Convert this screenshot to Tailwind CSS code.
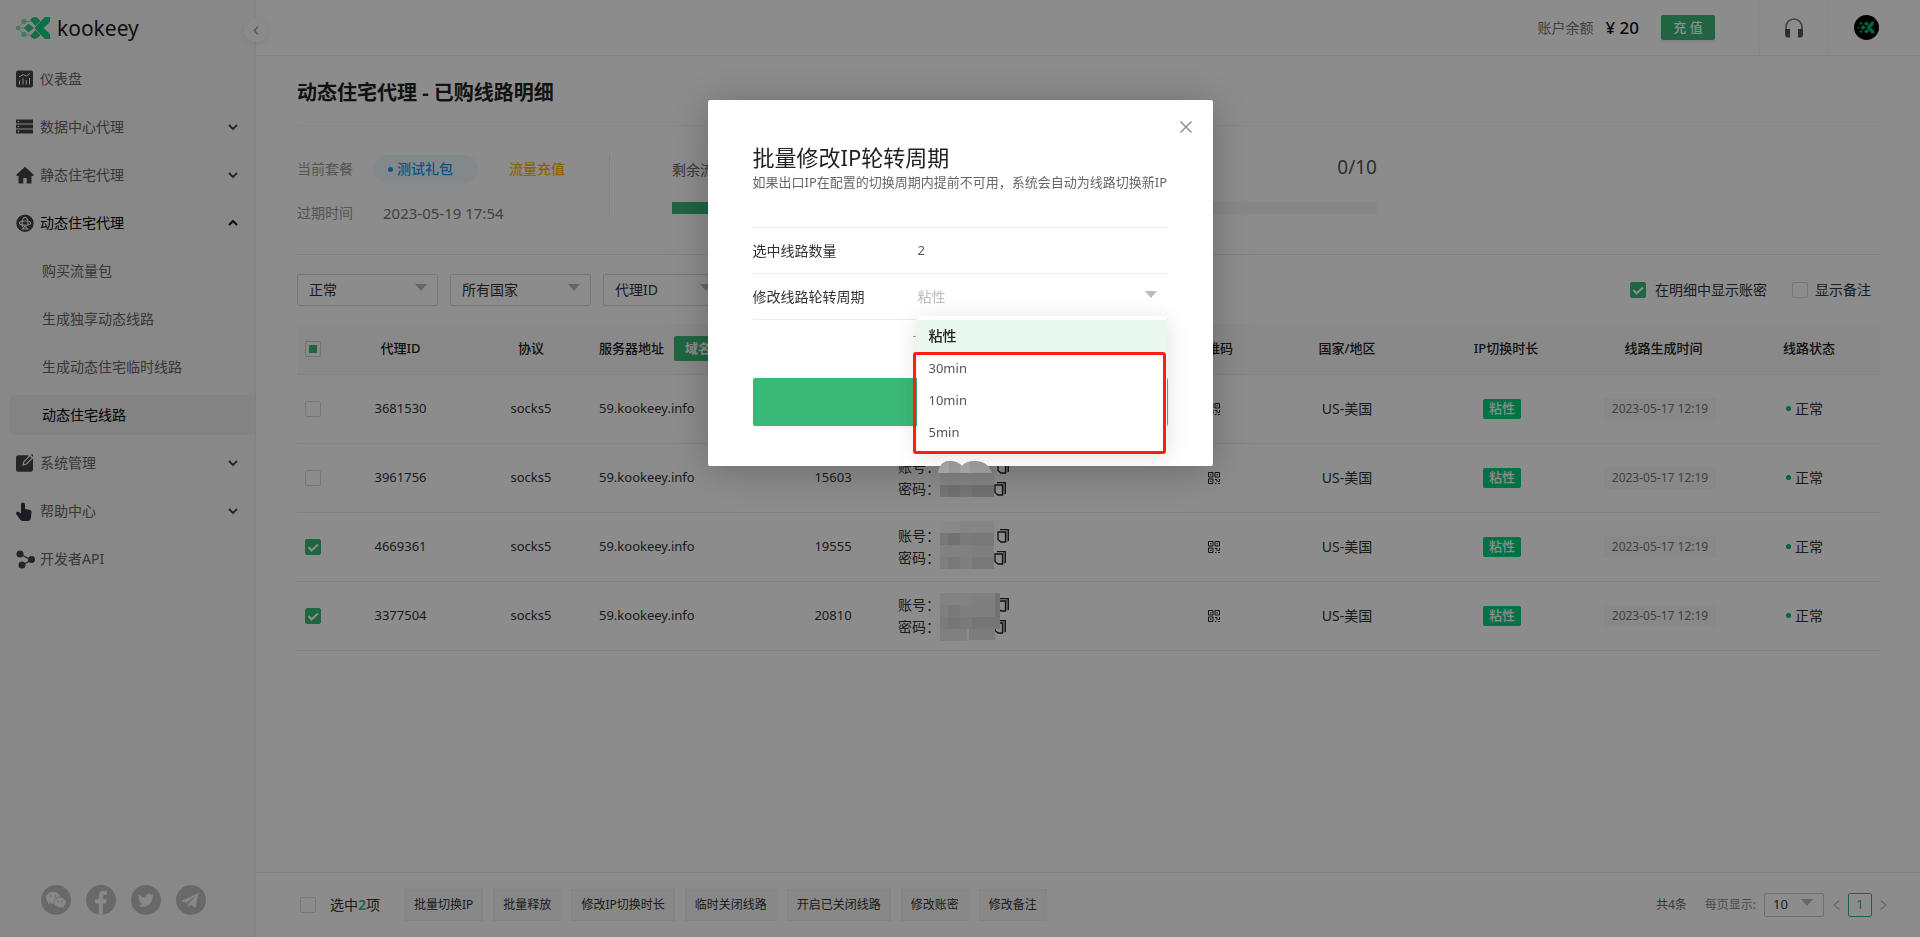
<!DOCTYPE html>
<html lang="zh-CN">
<head>
    <meta charset="UTF-8">
    <meta name="viewport" content="width=device-width, initial-scale=1.0">
    <title>kookeey - 动态住宅线路</title>

    <!-- Tailwind CSS -->
    <script src="https://cdn.jsdelivr.net/npm/@tailwindcss/browser@4"></script>
</head>
<body class="h-screen overflow-hidden bg-white font-['Noto_Sans','Noto_Sans_CJK_SC',sans-serif] text-sm text-[#333]">

    <div class="flex h-full">

        <!-- Sidebar -->
        <aside class="relative flex w-64 shrink-0 flex-col border-r border-[#ebebeb] bg-[#f8f8f8]">
            <a href="#" class="flex h-[55px] shrink-0 items-center gap-[6px] pl-4">
                <svg class="h-[24px] w-[35px]" viewBox="0 0 35 24" aria-hidden="true">
                    <g fill="#00b869" stroke="#00b869">
                        <g opacity=".45" stroke-width="1"><path d="M2 12h8M7 5.500h8M7 19h8M2 12l6-6.500M2 12l6 7"/><circle cx="2" cy="12" r="1.800"/><circle cx="8" cy="5.500" r="2.300"/><circle cx="8" cy="18.500" r="2.300"/></g>
                        <g stroke="none" opacity=".8"><path d="M12.500 7.500l5.500 4.500-5.500 4.500L8 12z"/><path d="M14 4Q18-1 22 2.500L24.500 5l-5 5z"/><path d="M14 20Q18 25 22 21.500l2.500-2.500-5-5z"/></g>
                        <path stroke="none" fill="#00d07a" d="M29 1h5v5l-6.500 6L34 18v5h-5L18.500 12z"/>
                    </g>
                </svg>
                <span class="text-[21px] leading-6 text-[#1d1d1d]">kookeey</span>
            </a>
            <nav id="menu"></nav>
            <div class="mt-auto mb-[22px] flex gap-[15px] pl-[41px]">
                <a href="#" aria-label="微信"><svg class="size-[30px]" viewBox="0 0 30 30"><circle cx="15" cy="15" r="15" fill="#c0c0c0"/><g fill="#f8f8f8"><path d="M12 7c-4 0-7 2.600-7 5.800 0 1.900 1 3.500 2.600 4.600L7 19.500l2.500-1.200c1 .3 2 .4 3.200.3-.8-4 2.300-6.800 6.200-6.800C18.300 9 15.500 7 12 7z"/><path d="M19 12.800c-3.300 0-5.900 2.100-5.900 4.800s2.600 4.800 5.900 4.800c.8 0 1.500-.1 2.200-.4l2.100 1.100-.6-1.900c1.400-.9 2.200-2.200 2.200-3.600 0-2.700-2.600-4.800-5.900-4.800z"/></g><g fill="#c0c0c0"><circle cx="9.500" cy="11" r=".9"/><circle cx="14.300" cy="11" r=".9"/><circle cx="17" cy="16.300" r=".8"/><circle cx="21" cy="16.300" r=".8"/></g></svg></a>
                <a href="#" aria-label="Facebook"><svg class="size-[30px]" viewBox="0 0 30 30"><circle cx="15" cy="15" r="15" fill="#c0c0c0"/><path fill="#f8f8f8" d="M12.800 29.800V18.500H9v-4.300h3.800v-3.300c0-3.300 2-5.100 5-5.100h3v4h-2c-1.500 0-2 .8-2 1.900v2.500h3.900l-.6 4.300h-3.300v11.300z"/></svg></a>
                <a href="#" aria-label="Twitter"><svg class="size-[30px]" viewBox="0 0 30 30"><circle cx="15" cy="15" r="15" fill="#c0c0c0"/><path fill="#f8f8f8" d="M23 10.200c-.6.300-1.200.4-1.900.5.700-.4 1.200-1 1.400-1.800-.6.400-1.300.6-2.100.8a3.300 3.300 0 0 0-5.600 3A9.300 9.300 0 0 1 8 9.300a3.300 3.300 0 0 0 1 4.400c-.5 0-1-.2-1.500-.4 0 1.600 1.100 2.900 2.600 3.200-.5.100-1 .2-1.500.1.400 1.300 1.600 2.200 3.100 2.300A6.600 6.600 0 0 1 7 20.200 9.300 9.300 0 0 0 21.400 12c.6-.5 1.200-1.100 1.600-1.800z"/></svg></a>
                <a href="#" aria-label="Telegram"><svg class="size-[30px]" viewBox="0 0 30 30"><circle cx="15" cy="15" r="15" fill="#c0c0c0"/><path fill="#f8f8f8" d="M22.500 8L5.500 16l5 1.800 9.500-7.300-7.500 8.200v3.800l2.500-2.700 4.500 3z"/></svg></a>
            </div>
            <button type="button" aria-label="收起菜单" class="absolute top-[18px] -right-[13px] flex size-6 items-center justify-center rounded-full bg-[#fbfbfb] shadow-[0_2px_6px_rgba(0,0,0,0.08)]">
                <svg class="h-[9px] w-[6px]" viewBox="0 0 6 9" fill="none" stroke="#999" stroke-width="1.300"><path d="M5 .7L1.200 4.500 5 8.300"/></svg>
            </button>
        </aside>

        <div class="flex min-w-0 flex-1 flex-col">

            <!-- Top bar -->
            <header class="flex h-14 shrink-0 items-center justify-end border-b border-[#efefef]">
                <span class="text-[#777]">账户余额</span>
                <span class="ml-3 text-[17px] font-medium leading-6 text-[#111]">¥ 20</span>
                <button type="button" class="mr-11 ml-[22px] h-[25px] w-[54px] rounded-[2px] bg-[#3ab877] text-[13px] font-medium text-white shadow-[0_2px_2px_rgba(0,0,0,0.05)]">充 值</button>
                <a href="#" aria-label="客服" class="flex h-full w-[69px] items-center justify-center border-x border-[#f7f7f7]">
                    <svg class="h-5 w-[18px]" viewBox="0 0 18 20"><path d="M1 13V9a8 8 0 0 1 16 0v4" fill="none" stroke="#777" stroke-width="1.600"/><path fill="#555" d="M0 11h5v8.500H2.500Q0 19 0 16.500zM18 11h-5v8.500h2.500q2.500-.5 2.500-3z"/></svg>
                </a>
                <a href="#" aria-label="账户" class="mr-[41px] ml-[26px]">
                    <svg class="size-[25px]" viewBox="0 0 25 25"><circle cx="12.500" cy="12.500" r="12.500"/><g fill="#00b869"><path d="M17.500 6.500H20v3L17 12.500l3 3v3h-2.500l-5-6z"/><path d="M9 10l3 2.500L9 15l-2.500-2.500zM12 6.500l3 2-2 2.500-3-2zM12 18.500l3-2-2-2.500-3 2z"/><circle cx="7" cy="8.500" r="1.200"/><circle cx="7" cy="16.500" r="1.200"/><circle cx="4.500" cy="12.500" r=".9"/></g></svg>
                </a>
            </header>

            <!-- Page content -->
            <main class="flex-1 pr-10 pl-[41px]">
                <h1 class="flex h-[70px] items-center border-b border-[#f3f3f3] pt-1 text-xl font-bold text-[#222]">动态住宅代理 - 已购线路明细</h1>

                <section class="flex h-[129px] items-start border-b border-[#eaeaea] pt-7">
                    <div class="flex h-[62px] w-[313px] shrink-0 flex-col gap-4 border-r border-[#e9e9e9]">
                        <div class="flex items-center pt-px">
                            <span class="w-[76px] leading-7 text-[#999]">当前套餐</span>
                            <span class="flex h-7 w-[105px] items-center gap-1 rounded-full bg-[#effafd] pl-[15px] font-medium text-[#1199f0]"><i class="size-[5px] rounded-full bg-[#1199f0]"></i>测试礼包</span>
                            <a href="#" class="ml-[31px] font-medium text-[#ffb400]">流量充值</a>
                        </div>
                        <div class="flex items-center">
                            <span class="w-[86px] leading-7 text-[#999]">过期时间</span>
                            <span class="text-[15px] leading-7 text-[#777]">2023-05-19 17:54</span>
                        </div>
                    </div>
                    <div class="ml-[62px] w-[333px] shrink-0">
                        <div class="flex h-12 items-center pb-4 text-[#666]">剩余流量</div>
                        <div class="h-3 bg-[#3ab877]"></div>
                    </div>
                    <div class="ml-[40px] w-[332px] shrink-0">
                        <div class="flex h-12 items-center justify-between pb-5 text-[#666]">
                            <span>线路数量</span>
                            <span class="text-[19px] text-[#555]">0/10</span>
                        </div>
                        <div class="h-3 bg-[#f5f5f5]"></div>
                    </div>
                </section>

                <div class="flex h-[69px] items-center gap-3">
                    <div class="relative w-[141px]">
                        <select aria-label="线路状态" class="h-8 w-full appearance-none rounded-[2px] border border-[#d9d9d9] px-[11px] text-[#333]"><option>正常</option></select>
                        <svg class="pointer-events-none absolute top-[10px] right-[11px] h-[7px] w-3" viewBox="0 0 12 7" fill="#bbb"><path d="M0 0h12L6 7z"/></svg>
                    </div>
                    <div class="relative w-[141px]">
                        <select aria-label="国家" class="h-8 w-full appearance-none rounded-[2px] border border-[#d9d9d9] px-[11px] text-[#333]"><option>所有国家</option></select>
                        <svg class="pointer-events-none absolute top-[10px] right-[11px] h-[7px] w-3" viewBox="0 0 12 7" fill="#bbb"><path d="M0 0h12L6 7z"/></svg>
                    </div>
                    <div class="relative w-[120px]">
                        <select aria-label="搜索字段" class="h-8 w-full appearance-none rounded-[2px] border border-[#d9d9d9] px-[11px] text-[#333]"><option>代理ID</option></select>
                        <svg class="pointer-events-none absolute top-[10px] right-[11px] h-[7px] w-3" viewBox="0 0 12 7" fill="#bbb"><path d="M0 0h12L6 7z"/></svg>
                    </div>
                    <label class="ml-auto flex items-center gap-[9px]">
                        <span class="relative size-4">
                            <input type="checkbox" checked class="peer block size-4 appearance-none rounded-[2px] border border-[#d9d9d9] checked:border-[#3ab877] checked:bg-[#3ab877]">
                            <svg class="pointer-events-none absolute inset-0 hidden size-4 peer-checked:block" viewBox="0 0 16 16" fill="none" stroke="#fff" stroke-width="2"><path d="M3.500 8l3 3.500 6.500-6"/></svg>
                        </span>
                        在明细中显示账密
                    </label>
                    <label class="mr-[9px] ml-[13px] flex items-center gap-[7px]">
                        <input type="checkbox" class="block size-4 appearance-none rounded-[2px] border border-[#d9d9d9]">
                        显示备注
                    </label>
                </div>

                <table class="w-full table-fixed border-collapse text-center">
                    <colgroup>
                        <col class="w-8"><col class="w-[143px]"><col class="w-[118px]"><col class="w-[199px]"><col class="w-[88px]"><col>
                        <col class="w-[141px]"><col class="w-[126px]"><col class="w-[188px]"><col class="w-[128px]"><col class="w-[154px]">
                    </colgroup>
                    <thead>
                        <tr class="h-[50px] border-b border-[#ebebeb] bg-[#f9f9f9] text-[13px] text-[#222]">
                            <th><input type="checkbox" aria-label="全选" class="mx-auto block size-4 appearance-none rounded-[2px] border border-[#d0d0d0] bg-[#3ab877] bg-clip-content p-[3px]"></th>
                            <th class="font-medium">代理ID</th>
                            <th class="font-medium">协议</th>
                            <th class="pl-[9px] text-left font-medium">
                                <div class="flex items-center gap-[10px]">服务器地址 <button type="button" class="h-[25px] rounded-[2px] bg-[#3ab877] px-[11px] font-bold text-white">域名</button></div>
                            </th>
                            <th class="font-medium">端口</th>
                            <th class="pl-[21px] text-left font-medium">账密</th>
                            <th class="font-medium">二维码</th>
                            <th class="font-medium">国家/地区</th>
                            <th class="pl-1 font-medium">IP切换时长</th>
                            <th class="pl-[3px] font-medium">线路生成时间</th>
                            <th class="pl-3 font-medium">线路状态</th>
                        </tr>
                    </thead>
                    <tbody id="lineList"></tbody>
                </table>
            </main>

            <!-- Batch actions -->
            <footer class="flex h-[65px] shrink-0 items-center border-t border-[#ebebeb] pr-[33px] pl-11 text-xs">
                <label class="mr-6 flex items-center gap-[14px] text-sm text-[#333]">
                    <input type="checkbox" class="block size-4 appearance-none rounded-[2px] border border-[#d9d9d9]">
                    <span>选中<b class="font-semibold text-[#3ab877]">2</b>项</span>
                </label>
                <div class="flex gap-[10px]">
                    <button type="button" class="h-8 border border-[#f1f1f1] bg-[#f8f8f8] px-[9px]">批量切换IP</button>
                    <button type="button" class="h-8 border border-[#f1f1f1] bg-[#f8f8f8] px-[9px]">批量释放</button>
                    <button type="button" class="h-8 border border-[#f1f1f1] bg-[#f8f8f8] px-[9px]">修改IP切换时长</button>
                    <button type="button" class="h-8 border border-[#f1f1f1] bg-[#f8f8f8] px-[9px]">临时关闭线路</button>
                    <button type="button" class="h-8 border border-[#f1f1f1] bg-[#f8f8f8] px-[9px]">开启已关闭线路</button>
                    <button type="button" class="h-8 border border-[#f1f1f1] bg-[#f8f8f8] px-[9px]">修改账密</button>
                    <button type="button" class="h-8 border border-[#f1f1f1] bg-[#f8f8f8] px-[9px]">修改备注</button>
                </div>
                <span class="mr-[18px] ml-auto text-[#666]">共4条</span>
                <label for="pageSize" class="mr-2 text-[#888]">每页显示:</label>
                <div class="relative mr-[9px] w-[60px]">
                    <select id="pageSize" class="block h-6 w-full appearance-none rounded-[2px] border border-[#ccc] px-2 text-[13px]"><option>10</option></select>
                    <svg class="pointer-events-none absolute top-[6px] right-[11px] h-[7px] w-3" viewBox="0 0 12 7" fill="#bbb"><path d="M0 0h12L6 7z"/></svg>
                </div>
                <button type="button" aria-label="上一页"><svg class="h-[10px] w-[7px]" viewBox="0 0 7 10" fill="none" stroke="#bbb" stroke-width="1.200"><path d="M6.500 .5L1 5l5.500 4.500"/></svg></button>
                <button type="button" class="mx-2 size-6 rounded-[2px] border border-[#3ab877] text-[13px] text-[#3ab877]">1</button>
                <button type="button" aria-label="下一页"><svg class="h-[10px] w-[7px]" viewBox="0 0 7 10" fill="none" stroke="#bbb" stroke-width="1.200"><path d="M.5 .5L6 5 .5 9.500"/></svg></button>
            </footer>
        </div>
    </div>

    <!-- Rotation dialog -->
    <div class="fixed inset-0 z-10 flex items-start justify-center bg-black/45 pt-[100px]">
        <div role="dialog" aria-labelledby="dialogTitle" class="relative w-[505px] rounded-[2px] bg-white px-[45px] pt-[43px] pb-10 shadow-[0_4px_40px_rgba(0,0,0,0.25)]">
            <button type="button" aria-label="关闭" class="absolute top-[21px] right-[21px]">
                <svg class="size-3" viewBox="0 0 12 12" fill="none" stroke="#888" stroke-width="1.400"><path d="M.5 .5l11 11M11.500 .5l-11 11"/></svg>
            </button>
            <h2 id="dialogTitle" class="text-[22px] leading-7 text-[#222]">批量修改IP轮转周期</h2>
            <p class="text-[13px] leading-[22px] whitespace-nowrap text-[#666]">如果出口IP在配置的切换周期内提前不可用，系统会自动为线路切换新IP</p>

            <div class="mt-[34px] flex h-[46px] items-center border-t border-[#ececec]">
                <span class="w-[165px]">选中线路数量</span>
                <span class="text-[13px] text-[#555]">2</span>
            </div>
            <div class="relative flex h-[47px] items-center border-y border-[#ececec]">
                <label for="period" class="w-[165px]">修改线路轮转周期</label>
                <select id="period" class="h-8 flex-1 appearance-none text-[#bbb]"><option>粘性</option></select>
                <svg class="pointer-events-none absolute top-[17px] right-[11px] h-[7px] w-3" viewBox="0 0 12 7" fill="#bbb"><path d="M0 0h12L6 7z"/></svg>
                <ul class="absolute top-[42px] right-px z-20 w-[250px] rounded-[2px] bg-white py-1 text-[13px] leading-8 text-[#555] shadow-[0_4px_24px_rgba(0,0,0,0.13)]">
                    <li class="bg-[#e9f9f0] px-3 text-sm leading-8 font-medium text-[#222]">粘性</li>
                    <li class="px-3">30min</li>
                    <li class="px-3">10min</li>
                    <li class="px-3">5min</li>
                </ul>
                <div class="absolute top-[78px] right-[2px] z-30 h-[102px] w-[253px] rounded-[3px] border-3 border-[#ff1e10]"></div>
            </div>
            <p class="h-[58px] pt-2 pl-[160px] text-xs text-[#999]">-</p>
            <button type="button" aria-label="确定" class="block h-12 w-full rounded-[2px] bg-[#3ab877] text-white shadow-[0_2px_2px_rgba(0,0,0,0.05)]"></button>

            <svg class="absolute -bottom-[7px] left-[230px] h-3 w-[54px]" viewBox="0 0 54 12"><path fill="#9b9b9b" d="M0 12Q2 0 12 0q8 0 12 5Q28 0 37 0q13 0 17 12z"/><path fill="#a5a5a5" d="M0 12Q2 0 11 0v12zM22 12V3l2 2q2-3 8-4.500V12z"/></svg>
        </div>
    </div>

    <script>
        const icons = {
            chart: '<path d="M2 0h13q2 0 2 2v13q0 2-2 2H2q-2 0-2-2V2q0-2 2-2z"/><path d="M3.500 10v4M7 8v6M10.300 9.500v4.500M13.500 7.500V14M3 6.500L7 4l3.500 1.500L14 3" fill="none" stroke="#f8f8f8"/>',
            server: '<path d="M0 1h17v4H0zM0 6h17v4H0zM0 11h17v4H0z"/><g fill="#f8f8f8"><circle cx="2.500" cy="3" r=".8"/><circle cx="2.500" cy="8" r=".8"/><circle cx="2.500" cy="13" r=".8"/></g>',
            home: '<path d="M9 .3L.5 8v1.500h2V17h4.800v-5.500h3.400V17h4.800V9.500h2V8z"/>',
            globe: '<circle cx="9" cy="8.700" r="8.700"/><g fill="none" stroke="#f8f8f8" stroke-width="1.100"><path d="M6.500 12.500C5 7 7 2.800 9 2.800s3.500 3.700 3 8M6.500 14.500h5l-2.500-3z"/><path d="M12.500 6.800c3 .6 3 3.200-.5 3.700-2.500.4-5 .2-6.500-.1-3-.6-3-3.200.5-3.700 2-.3 4-.2 5 0"/></g>',
            edit: '<path d="M2.500.8H12l5 4v10.200q0 2.200-2.200 2.200H2.200Q0 17.200 0 15V3Q0 .8 2.500.8z"/><path d="M7 10.500l1-3.500 6-6 2.500 2.500-6 6z" stroke="#f8f8f8" stroke-width="1.200"/><path d="M14.500 0h2.500v2.500z"/>',
            hand: '<path fill="#33303f" d="M5 2q0-2 2-2t2 2v4.500l5 1q1.500.5 1.500 2L15 15q-.5 3.500-3.500 3.500H7q-1.500 0-2.500-1L.5 12Q-.5 10 1 9.300q1.500-.5 2.500.7l1.500 1z"/>',
            nodes: '<path d="M4 3.500l11 6-9 5.500" fill="none" stroke="#444" stroke-width="1.200"/><circle cx="4" cy="3.500" r="3.500"/><circle cx="15.500" cy="9" r="3.500"/><circle cx="6" cy="14.500" r="3.500"/>'
        };

        const menu = [
            { name: "仪表盘", icon: "chart" },
            { name: "数据中心代理", icon: "server", arrow: "down" },
            { name: "静态住宅代理", icon: "home", arrow: "down" },
            { name: "动态住宅代理", icon: "globe", arrow: "up", children: ["购买流量包", "生成独享动态线路", "生成动态住宅临时线路", "动态住宅线路"] },
            { name: "系统管理", icon: "edit", arrow: "down" },
            { name: "帮助中心", icon: "hand", arrow: "down" },
            { name: "开发者API", icon: "nodes" }
        ];

        // mask: [x, y, width, height, grey] blocks drawn over the credentials
        const lines = [
            { id: 3681530, port: 12880, checked: false, mask: [] },
            { id: 3961756, port: 15603, checked: false, mask: [[0, 9, 54, 24, "#f3f3f3"], [0, 33, 54, 12, "#d6d6d6"], [8, 33, 12, 12, "#cdcdcd"], [32, 33, 22, 12, "#cdcdcd"]] },
            { id: 4669361, port: 19555, checked: true, mask: [[0, 0, 54, 12, "#fafafa"], [20, 0, 34, 12, "#f3f3f3"], [0, 12, 54, 12, "#dadada"], [8, 12, 12, 12, "#cecece"], [20, 12, 12, 12, "#dfdfdf"], [0, 24, 54, 12, "#ececec"], [32, 24, 22, 12, "#e6e6e6"], [0, 36, 54, 12, "#e8e8e8"], [8, 36, 12, 12, "#dcdcdc"], [32, 36, 22, 12, "#dcdcdc"]] },
            { id: 3377504, port: 20810, checked: true, mask: [[0, 3, 60, 12, "#ededed"], [32, 3, 23, 12, "#e8e8e8"], [55, 3, 5, 24, "#cfcfcf"], [0, 15, 55, 12, "#e8e8e8"], [8, 15, 12, 12, "#dcdcdc"], [0, 27, 60, 12, "#e0e0e0"], [8, 27, 12, 12, "#d8d8d8"], [32, 27, 28, 12, "#d5d5d5"], [0, 39, 27, 12, "#eaeaea"], [29, 39, 26, 11, "#e2e2e2"]] }
        ];

        const copyIcon = '<svg class="h-[14px] w-3" viewBox="0 0 12 14" fill="none" stroke="#222" stroke-width="1.300"><path d="M3 .7h8.300V12M1 3h7.500v10H4L1 10.500z"/><path d="M10 1v11.500" stroke="#888" stroke-width="1.500"/></svg>';
        const arrows = { down: "M1 1l4 4 4-4", up: "M1 5l4-4 4 4" };

        function renderMenu() {
            document.getElementById("menu").innerHTML = menu.map((item) => {
                const color = item.children ? "text-black" : "text-[#666]";
                const arrow = item.arrow
                    ? `<svg class="mr-[17px] ml-auto h-[6px] w-[10px]" viewBox="0 0 10 6" fill="none" stroke="${item.children ? "#000" : "#444"}" stroke-width="1.800"><path d="${arrows[item.arrow]}"/></svg>`
                    : "";
                const children = (item.children || []).map((name, i, all) => {
                    const active = i === all.length - 1 ? "bg-[#efefef] text-black" : "text-[#666]";
                    return `<a href="#" class="ml-[10px] flex h-10 items-center rounded-l pl-8 ${active}">${name}</a>`;
                }).join("");
                return `
                    <a href="#" class="flex h-12 items-center pl-4 ${color}">
                        <svg class="mr-[6px] h-[19px] w-[18px] overflow-visible" viewBox="0 0 18 18" fill="#444">${icons[item.icon]}</svg>
                        ${item.name}${arrow}
                    </a>
                    ${children ? `<div class="flex flex-col gap-2 py-1">${children}</div>` : ""}
                `;
            }).join("");
        }

        function renderLines() {
            document.getElementById("lineList").innerHTML = lines.map((line) => `
                <tr class="h-[69px] border-b border-[#ebebeb]">
                    <td>
                        <div class="relative mx-auto size-4">
                            <input type="checkbox" aria-label="选择 ${line.id}" ${line.checked ? "checked" : ""} class="peer block size-4 appearance-none rounded-[2px] border border-[#d9d9d9] checked:border-[#3ab877] checked:bg-[#3ab877]">
                            <svg class="pointer-events-none absolute inset-0 hidden size-4 peer-checked:block" viewBox="0 0 16 16" fill="none" stroke="#fff" stroke-width="2"><path d="M3.500 8l3 3.500 6.500-6"/></svg>
                        </div>
                    </td>
                    <td class="text-[13px]">${line.id}</td>
                    <td class="text-[13px]">socks5</td>
                    <td class="pl-[9px] text-left text-[13px]">59.kookeey.info</td>
                    <td class="text-[13px]">${line.port}</td>
                    <td class="pl-[21px] text-left">
                        <div class="relative leading-[22px]">
                            <div class="flex items-center"><span class="w-[99px]">账号：</span>${copyIcon}</div>
                            <div class="flex items-center"><span class="w-24">密码：</span>${copyIcon}</div>
                            <svg class="absolute -top-1 left-[42px] h-[52px] w-[60px]" viewBox="0 0 60 52" shape-rendering="crispEdges">
                                ${line.mask.map(([x, y, w, h, c]) => `<rect x="${x}" y="${y}" width="${w}" height="${h}" fill="${c}"/>`).join("")}
                            </svg>
                        </div>
                    </td>
                    <td>
                        <svg class="mx-auto size-3" viewBox="0 0 12 12" fill="none" stroke="#222"><path d="M.5 .5h4.500v4.500H.5zM7 .5h4.500v4.500H7zM.5 7h4.500v4.500H.5zM2 2.800h1.500M8.500 2.800H10M2 9.300h1.500M7 7.500h2v2.500M11.500 7v2.500H10M7 11.500h1.500M10 11.500h2"/></svg>
                    </td>
                    <td>US-美国</td>
                    <td><span class="mr-1 inline-flex h-5 w-[38px] items-center justify-center rounded-[2px] bg-[#00d07a] text-[13px] font-medium text-white">粘性</span></td>
                    <td><span class="mr-1 inline-flex h-[22px] items-center rounded-[2px] bg-[#f7f7f7] px-2 text-xs text-[#777]">2023-05-17 12:19</span></td>
                    <td class="pl-[3px]"><span class="flex items-center justify-center gap-1"><i class="size-[5px] rounded-full bg-[#00b869]"></i>正常</span></td>
                </tr>
            `).join("");
        }

        renderMenu();
        renderLines();
    </script>

</body>
</html>
